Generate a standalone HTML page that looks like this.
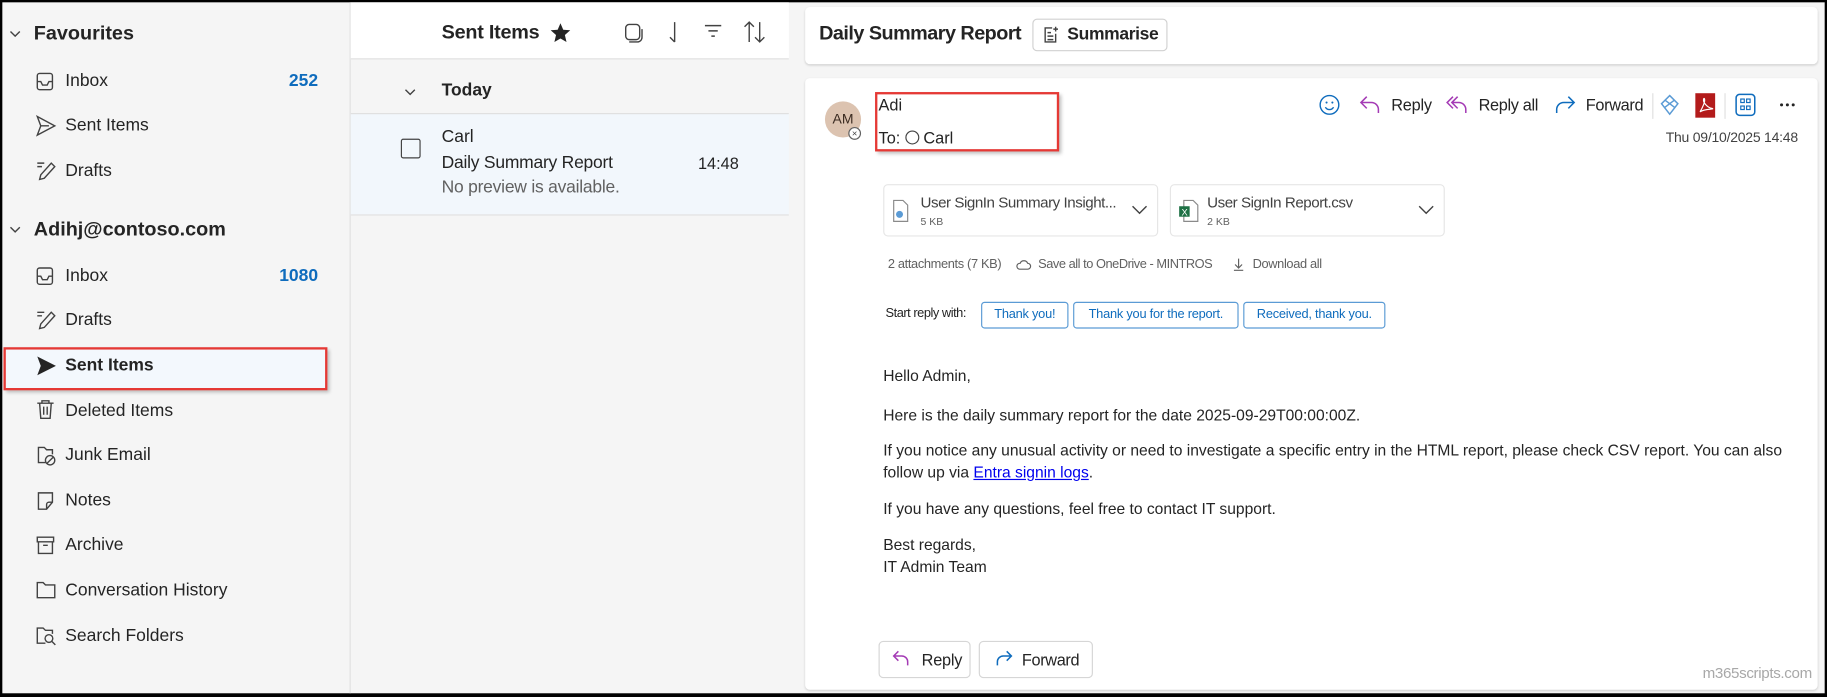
<!DOCTYPE html>
<html><head><meta charset="utf-8"><style>
html,body{margin:0;padding:0;width:1827px;height:696px;overflow:hidden;background:#000}
#w{position:absolute;left:0;top:0;width:1568px;height:598px;transform:scale(1.16518);transform-origin:0 0;font-family:"Liberation Sans",sans-serif;color:#242424}
.a{position:absolute;white-space:nowrap}
svg{position:absolute;overflow:visible}
.it{font-size:15px}
.ic{stroke:#424242;fill:none;stroke-width:1.2}
.btn{position:absolute;border:1px solid #5b9bd5;border-radius:3px;color:#0f6cbd;font-size:11px;height:21px;line-height:21px;text-align:center;background:#fff;letter-spacing:-.2px}
.bd{font-size:13.4px}
</style></head><body><div id="w">
<div class="a" style="left:2px;top:2px;width:1564px;height:593px;background:#f5f5f5"></div>
<!-- sidebar -->
<div class="a" style="left:300px;top:2px;width:1px;height:593px;background:#e1e1e1"></div>
<svg style="left:8px;top:25px" width="10" height="8"><path d="M1 2l4 4 4-4" class="ic"/></svg>
<div class="a" style="left:29px;top:19px;font-size:17px;font-weight:bold">Favourites</div>
<svg style="left:31px;top:62px" width="16" height="16"><rect x="1" y="1" width="13" height="14" rx="2" class="ic"/><path d="M1 8h3l1.5 3h4L11 8h3" class="ic"/></svg>
<div class="a it" style="left:56px;top:61px">Inbox</div>
<div class="a" style="left:240px;top:61px;width:33px;text-align:right;font-size:15px;font-weight:bold;color:#0f6cbd">252</div>
<svg style="left:31px;top:99px" width="18" height="18"><path d="M1 1l15 8-15 8 3-8z M4 9h7" class="ic"/></svg>
<div class="a it" style="left:56px;top:99px">Sent Items</div>
<svg style="left:31px;top:138px" width="18" height="18"><path d="M1 2h6M1 5h4M3 16l1-4 9-10 3 3-9 10z" class="ic"/></svg>
<div class="a it" style="left:56px;top:138px">Drafts</div>
<svg style="left:8px;top:193px" width="10" height="8"><path d="M1 2l4 4 4-4" class="ic"/></svg>
<div class="a" style="left:29px;top:187px;font-size:17px;font-weight:bold">Adihj@contoso.com</div>
<svg style="left:31px;top:229px" width="16" height="16"><rect x="1" y="1" width="13" height="14" rx="2" class="ic"/><path d="M1 8h3l1.5 3h4L11 8h3" class="ic"/></svg>
<div class="a it" style="left:56px;top:228px">Inbox</div>
<div class="a" style="left:230px;top:228px;width:43px;text-align:right;font-size:15px;font-weight:bold;color:#0f6cbd">1080</div>
<svg style="left:31px;top:266px" width="18" height="18"><path d="M1 2h6M1 5h4M3 16l1-4 9-10 3 3-9 10z" class="ic"/></svg>
<div class="a it" style="left:56px;top:266px">Drafts</div>
<div class="a" style="left:3px;top:298px;width:274px;height:33px;background:#f3f8fd;border:2px solid #e53935;box-shadow:2px 2px 3px rgba(0,0,0,.25)"></div>
<svg style="left:31px;top:305px" width="18" height="18"><path d="M1 1l16 8-16 8 3-8z" fill="#242424"/></svg>
<div class="a it" style="left:56px;top:305px;font-weight:bold">Sent Items</div>
<svg style="left:31px;top:343px" width="16" height="18"><path d="M1 3h14M5 3V1h6v2M3 3l1 13h8l1-13M6.5 6v7M9.5 6v7" class="ic"/></svg>
<div class="a it" style="left:56px;top:344px">Deleted Items</div>
<svg style="left:31px;top:382px" width="18" height="18"><path d="M8 15H2V2h5l2 2h5v4" class="ic"/><circle cx="12" cy="13" r="4" class="ic"/><path d="M9.5 15.5l5-5" class="ic"/></svg>
<div class="a it" style="left:56px;top:382px">Junk Email</div>
<svg style="left:31px;top:421px" width="16" height="18"><path d="M9 16H2V2h12v8zM9 16v-4a2 2 0 012-2h3" class="ic"/></svg>
<div class="a it" style="left:56px;top:421px">Notes</div>
<svg style="left:31px;top:459px" width="16" height="18"><path d="M1 2h14v4H1zM2 6v10h12V6M6 9h4" class="ic"/></svg>
<div class="a it" style="left:56px;top:459px">Archive</div>
<svg style="left:31px;top:498px" width="18" height="18"><path d="M1 15V2h5l2 2h8v11z" class="ic"/></svg>
<div class="a it" style="left:56px;top:498px">Conversation History</div>
<svg style="left:31px;top:537px" width="18" height="18"><path d="M8 15H1V2h5l2 2h6v3" class="ic"/><circle cx="11" cy="11" r="3.3" class="ic"/><path d="M13.5 13.5l3 3" class="ic"/></svg>
<div class="a it" style="left:56px;top:537px">Search Folders</div>
<!-- list -->
<div class="a" style="left:301px;top:2px;width:376px;height:48px;background:#fff;border-bottom:1px solid #e0e0e0"></div>
<div class="a" style="left:379px;top:18px;font-size:17px;font-weight:bold;letter-spacing:-.2px">Sent Items</div>
<svg style="left:472px;top:19px" width="18" height="18"><path d="M9 1l2.4 5.5 6 .5-4.6 4 1.4 6L9 14l-5.2 3 1.4-6L.6 7l6-.5z" fill="#242424"/></svg>
<svg style="left:536px;top:20px" width="16" height="18"><rect x="1" y="1" width="12" height="13" rx="3" class="ic"/><path d="M4 16h7a4 4 0 004-4V5" class="ic"/></svg>
<svg style="left:571px;top:18px" width="14" height="20"><path d="M8 1v17M8 18l-4-4" class="ic"/></svg>
<svg style="left:604px;top:21px" width="16" height="12"><path d="M1 1h14M4 5.5h8M6.5 10h3" class="ic"/></svg>
<svg style="left:638px;top:18px" width="20" height="20"><path d="M5 18V1M1 5l4-4 4 4M14 1v17M10 14l4 4 4-4" class="ic"/></svg>
<svg style="left:347px;top:75px" width="10" height="8"><path d="M1 2l4 4 4-4" class="ic"/></svg>
<div class="a" style="left:379px;top:69px;font-size:15px;font-weight:bold">Today</div>
<div class="a" style="left:301px;top:97px;width:376px;height:86px;background:#f2f7fc;border-top:1px solid #e0e0e0;border-bottom:1px solid #e0e0e0"></div>
<div class="a" style="left:344px;top:119px;width:15px;height:15px;border:1.3px solid #424242;border-radius:2px"></div>
<div class="a it" style="left:379px;top:109px">Carl</div>
<div class="a it" style="left:379px;top:131px;letter-spacing:-.2px">Daily Summary Report</div>
<div class="a" style="left:599px;top:132px;font-size:14px">14:48</div>
<div class="a it" style="left:379px;top:152px;color:#616161;letter-spacing:-.2px">No preview is available.</div>
<!-- reading header -->
<div class="a" style="left:691px;top:6px;width:869px;height:49px;background:#fff;border-radius:4px;box-shadow:0 1px 2px rgba(0,0,0,.15)"></div>
<div class="a" style="left:703px;top:19px;font-size:17px;font-weight:bold;letter-spacing:-.45px">Daily Summary Report</div>
<div class="a" style="left:886px;top:16px;width:114px;height:26px;border:1px solid #d1d1d1;border-radius:4px;background:#fff"></div>
<svg style="left:895px;top:22px" width="14" height="16"><path d="M8 2H2v12h9V7M4 6h3M4 9h5M4 12h5M11 1v4M9 3h4" class="ic"/></svg>
<div class="a" style="left:916px;top:21px;font-size:15px;font-weight:bold;letter-spacing:-.3px">Summarise</div>
<!-- message card -->
<div class="a" style="left:691px;top:67px;width:869px;height:525px;background:#fff;border-radius:4px;box-shadow:0 1px 2px rgba(0,0,0,.15)"></div>
<div class="a" style="left:708px;top:87px;width:31px;height:31px;border-radius:50%;background:#dcc3b0;font-size:12px;line-height:31px;text-align:center;color:#3a2a20">AM</div>
<div class="a" style="left:728px;top:109px;width:9px;height:9px;border-radius:50%;background:#fff;border:1px solid #616161;font-size:8px;line-height:9px;text-align:center;color:#424242">×</div>
<div class="a" style="left:751px;top:79px;width:154px;height:47px;border:2px solid #e53935;box-shadow:2px 2px 3px rgba(0,0,0,.25)"></div>
<div class="a" style="left:754px;top:82px;font-size:14px">Adi</div>
<div class="a" style="left:754px;top:110px;font-size:14px">To: <span style="display:inline-block;width:10px;height:10px;border:1.2px solid #424242;border-radius:50%;vertical-align:-1px"></span> Carl</div>
<svg style="left:1132px;top:81px" width="18" height="18"><circle cx="9" cy="9" r="8" stroke="#0f6cbd" fill="none" stroke-width="1.2"/><circle cx="6.5" cy="7" r=".9" fill="#0f6cbd"/><circle cx="11.5" cy="7" r=".9" fill="#0f6cbd"/><path d="M5.5 11a4 4 0 007 0" stroke="#0f6cbd" fill="none" stroke-width="1.2"/></svg>
<svg style="left:1167px;top:82px" width="18" height="16"><path d="M6 1L1 6l5 5M1 6h9a6 6 0 016 6v3" stroke="#a43bb5" fill="none" stroke-width="1.3"/></svg>
<div class="a" style="left:1194px;top:82px;font-size:14px;letter-spacing:-.2px">Reply</div>
<svg style="left:1241px;top:82px" width="20" height="16"><path d="M6 1L1 6l5 5M10 1L5 6l5 5M5 6h6a6 6 0 016 6v3" stroke="#a43bb5" fill="none" stroke-width="1.3"/></svg>
<div class="a" style="left:1269px;top:82px;font-size:14px;letter-spacing:-.3px">Reply all</div>
<svg style="left:1334px;top:82px" width="18" height="16"><path d="M12 1l5 5-5 5M17 6H8a6 6 0 00-6 6v3" stroke="#0f6cbd" fill="none" stroke-width="1.3"/></svg>
<div class="a" style="left:1361px;top:82px;font-size:14px;letter-spacing:-.3px">Forward</div>
<div class="a" style="left:1418px;top:80px;width:1px;height:22px;background:#e0e0e0"></div>
<svg style="left:1424px;top:80px" width="18" height="20"><path d="M9 2l7 7-7 9-7-9z M5 6l8 6M13 6l-8 6" stroke="#5b9bd5" fill="none" stroke-width="1.3"/></svg>
<div class="a" style="left:1455px;top:80px;width:17px;height:21px;background:#b31b1b"></div>
<svg style="left:1457px;top:83px" width="13" height="16"><path d="M2 13c2-3 4-8 4-10s-1-2-1 0 3 6 7 7-6 0-10 3" stroke="#fff" fill="none" stroke-width="1"/></svg>
<div class="a" style="left:1480px;top:80px;width:1px;height:22px;background:#e0e0e0"></div>
<svg style="left:1489px;top:80px" width="18" height="20"><rect x="1" y="1" width="16" height="18" rx="3" stroke="#0f6cbd" fill="none" stroke-width="1.3"/><rect x="5" y="5" width="3" height="3" stroke="#0f6cbd" fill="none"/><rect x="10" y="5" width="3" height="3" stroke="#0f6cbd" fill="none"/><rect x="5" y="11" width="3" height="3" stroke="#0f6cbd" fill="none"/><rect x="10" y="11" width="3" height="3" stroke="#0f6cbd" fill="none"/></svg>
<svg style="left:1527px;top:88px" width="14" height="4"><circle cx="2" cy="2" r="1.3" fill="#242424"/><circle cx="7" cy="2" r="1.3" fill="#242424"/><circle cx="12" cy="2" r="1.3" fill="#242424"/></svg>
<div class="a" style="left:1400px;top:111px;width:143px;text-align:right;font-size:12px;color:#424242;letter-spacing:-.2px">Thu 09/10/2025 14:48</div>
<!-- attachments -->
<div class="a" style="left:758px;top:158px;width:234px;height:43px;border:1px solid #e6e6e6;border-radius:4px"></div>
<svg style="left:766px;top:171px" width="14" height="20"><path d="M1 1h8l4 4v14H1z" stroke="#8a8a8a" fill="#fff" stroke-width="1"/><circle cx="6" cy="13" r="3" fill="#5b9bd5"/></svg>
<div class="a" style="left:790px;top:166px;font-size:13px;color:#424242;letter-spacing:-.4px">User SignIn Summary Insight...</div>
<div class="a" style="left:790px;top:185px;font-size:9px;color:#616161">5 KB</div>
<svg style="left:971px;top:176px" width="14" height="9"><path d="M1 1l6 6 6-6" class="ic"/></svg>
<div class="a" style="left:1004px;top:158px;width:234px;height:43px;border:1px solid #e6e6e6;border-radius:4px"></div>
<svg style="left:1011px;top:171px" width="18" height="20"><path d="M5 1h8l4 4v14H5z" stroke="#8a8a8a" fill="#fff"/><rect x="1" y="6" width="9" height="9" fill="#1d7044"/><text x="3" y="14" font-size="8" fill="#fff" font-family="Liberation Sans">X</text></svg>
<div class="a" style="left:1036px;top:166px;font-size:13px;color:#424242;letter-spacing:-.4px">User SignIn Report.csv</div>
<div class="a" style="left:1036px;top:185px;font-size:9px;color:#616161">2 KB</div>
<svg style="left:1217px;top:176px" width="14" height="9"><path d="M1 1l6 6 6-6" class="ic"/></svg>
<div class="a" style="left:762px;top:221px;font-size:11px;color:#616161;letter-spacing:-.3px">2 attachments (7 KB)</div>
<svg style="left:872px;top:223px" width="12" height="9"><path d="M3 8h7a2.5 2.5 0 000-5 3.5 3.5 0 00-6.5 0A2.5 2.5 0 003 8z" stroke="#616161" fill="none"/></svg>
<div class="a" style="left:891px;top:221px;font-size:11px;color:#616161;letter-spacing:-.4px">Save all to OneDrive - MINTROS</div>
<svg style="left:1058px;top:221px" width="10" height="12"><path d="M5 1v8M2 6l3 3 3-3M1 11h8" stroke="#616161" fill="none"/></svg>
<div class="a" style="left:1075px;top:221px;font-size:11px;color:#616161;letter-spacing:-.3px">Download all</div>
<div class="a" style="left:760px;top:263px;font-size:11px;color:#242424;letter-spacing:-.4px">Start reply with:</div>
<div class="btn" style="left:842px;top:259px;width:73px">Thank you!</div>
<div class="btn" style="left:921px;top:259px;width:140px">Thank you for the report.</div>
<div class="btn" style="left:1067px;top:259px;width:120px">Received, thank you.</div>
<!-- body -->
<div class="a bd" style="left:758px;top:315px">Hello Admin,</div>
<div class="a bd" style="left:758px;top:349px">Here is the daily summary report for the date 2025-09-29T00:00:00Z.</div>
<div class="a bd" style="left:758px;top:379px">If you notice any unusual activity or need to investigate a specific entry in the HTML report, please check CSV report. You can also</div>
<div class="a bd" style="left:758px;top:398px">follow up via <span style="color:#0000ee;text-decoration:underline">Entra signin logs</span>.</div>
<div class="a bd" style="left:758px;top:429px">If you have any questions, feel free to contact IT support.</div>
<div class="a bd" style="left:758px;top:460px">Best regards,</div>
<div class="a bd" style="left:758px;top:479px">IT Admin Team</div>
<div class="a" style="left:754px;top:550px;width:77px;height:30px;border:1px solid #d6d6d6;border-radius:4px"></div>
<svg style="left:766px;top:558px" width="16" height="14"><path d="M5 1L1 5l4 4M1 5h7a5 5 0 015 5v3" stroke="#a43bb5" fill="none" stroke-width="1.3"/></svg>
<div class="a" style="left:791px;top:558px;font-size:14px;letter-spacing:-.2px">Reply</div>
<div class="a" style="left:840px;top:550px;width:96px;height:30px;border:1px solid #d6d6d6;border-radius:4px"></div>
<svg style="left:853px;top:558px" width="16" height="14"><path d="M11 1l4 4-4 4M15 5H8a5 5 0 00-5 5v3" stroke="#0f6cbd" fill="none" stroke-width="1.3"/></svg>
<div class="a" style="left:877px;top:558px;font-size:14px;letter-spacing:-.3px">Forward</div>
<div class="a" style="left:1400px;top:570px;width:155px;text-align:right;font-size:13px;color:#a8a8a8;letter-spacing:-.3px">m365scripts.com</div>
</div></body></html>
